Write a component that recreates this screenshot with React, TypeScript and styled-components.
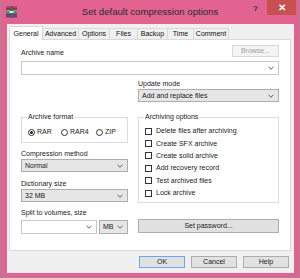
import React from "react";
import styled, { createGlobalStyle } from "styled-components";

const Global = createGlobalStyle`
  html, body { margin: 0; padding: 0; background: #ffffff; }
  * { box-sizing: border-box; }
  body { font-family: "Liberation Sans", Arial, sans-serif; }
`;

const Window = styled.div`
  width: 300px;
  height: 278px;
  background: #e2638f;
  border: 1px solid #a58794;
  border-top: none;
  display: flex;
  flex-direction: column;
`;

const TitleBar = styled.div`
  height: 24px;
  display: grid;
  grid-template-columns: 1fr auto 1fr;
  align-items: start;
`;

const IconBox = styled.div`
  padding: 6px 0 0 4px;
  display: flex;
`;

const Title = styled.div`
  font-size: 9.6px;
  line-height: 12px;
  color: #2b2b2b;
  padding-top: 6px;
  white-space: nowrap;
`;

const Controls = styled.div`
  display: flex;
  justify-content: flex-end;
  align-items: flex-start;
  padding-right: 3px;
`;

const HelpGlyph = styled.div`
  font-size: 8px;
  font-weight: bold;
  color: #333;
  line-height: 8px;
  padding-top: 5px;
  margin-right: 9px;
`;

const CloseBtn = styled.div`
  width: 29px;
  height: 15px;
  background: #c75050;
  color: #fff;
  font-size: 10px;
  font-weight: bold;
  display: flex;
  align-items: center;
  justify-content: center;
  line-height: 10px;
`;

const Client = styled.div`
  flex: 1;
  margin: 0 5px 4px 6px;
  background: #f0f0f0;
  padding: 2px 3px 0 2px;
  display: flex;
  flex-direction: column;
`;

const TabStrip = styled.div`
  display: flex;
  align-items: flex-end;
  height: 14px;
  margin-bottom: -1px;
`;

const Tab = styled.div<{ $w: number; $active?: boolean }>`
  width: ${(p) => p.$w}px;
  height: ${(p) => (p.$active ? 14 : 11)}px;
  margin-bottom: ${(p) => (p.$active ? 0 : 1)}px;
  margin-left: ${(p) => (p.$active ? 0 : -1)}px;
  background: ${(p) => (p.$active ? "#ffffff" : "#f0f0f0")};
  border: 1px solid #d9d9d9;
  border-bottom: none;
  font-size: 7px;
  line-height: 8px;
  color: #111;
  display: flex;
  align-items: center;
  justify-content: center;
  position: relative;
  z-index: ${(p) => (p.$active ? 2 : 1)};
  &:first-child { margin-left: 0; }
`;

const Panel = styled.div`
  height: 212px;
  background: #ffffff;
  border: 1px solid #d9d9d9;
  padding: 5px 11px 0 11px;
  display: flex;
  flex-direction: column;
`;

const Label = styled.div`
  font-size: 7px;
  line-height: 8px;
  color: #1a1a1a;
  white-space: nowrap;
`;

const TopRow = styled.div`
  display: flex;
  justify-content: space-between;
  align-items: flex-end;
  height: 12px;
`;

const Button = styled.div<{ $w?: number; $disabled?: boolean; $default?: boolean; $h?: number }>`
  width: ${(p) => (p.$w ? `${p.$w}px` : "auto")};
  height: ${(p) => p.$h ?? 12}px;
  background: ${(p) => (p.$disabled ? "#f4f4f4" : "#e1e1e1")};
  border: 1px solid ${(p) => (p.$disabled ? "#d9d9d9" : p.$default ? "#6fa8e6" : "#adadad")};
  color: ${(p) => (p.$disabled ? "#a3a3a3" : "#1a1a1a")};
  font-size: 7px;
  line-height: 8px;
  display: flex;
  align-items: center;
  justify-content: center;
`;

const Combo = styled.div<{ $edit?: boolean; $w?: number; $h?: number }>`
  width: ${(p) => (p.$w ? `${p.$w}px` : "100%")};
  height: ${(p) => p.$h ?? 13}px;
  background: ${(p) => (p.$edit ? "#ffffff" : "#e6e6e6")};
  border: 1px solid ${(p) => (p.$edit ? "#c5c7cc" : "#adadad")};
  display: flex;
  align-items: center;
  justify-content: space-between;
  padding: 0 4px 0 3px;
  font-size: 7px;
  line-height: 8px;
  color: #1a1a1a;
`;

const Chevron = () => (
  <svg width="6" height="4" viewBox="0 0 6 4">
    <polyline points="0.5,0.8 3,3.2 5.5,0.8" fill="none" stroke="#606060" strokeWidth="1" />
  </svg>
);

const NameCombo = styled(Combo)`
  margin-top: 4px;
`;

const UpdateRow = styled.div`
  display: grid;
  grid-template-columns: 107px 141px;
  column-gap: 10px;
  margin-top: 5px;
`;

const Stack = styled.div`
  display: flex;
  flex-direction: column;
  gap: 1px;
`;

const Columns = styled.div`
  display: grid;
  grid-template-columns: 107px 141px;
  column-gap: 10px;
  margin-top: 11px;
`;

const Column = styled.div`
  display: flex;
  flex-direction: column;
`;

const Group = styled.fieldset<{ $h: number }>`
  margin: 0;
  height: ${(p) => p.$h}px;
  border: 1px solid #dcdcdc;
  padding: 0 6px;
  min-width: 0;
`;

const Legend = styled.legend`
  font-size: 7px;
  line-height: 8px;
  color: #1a1a1a;
  padding: 0 1px;
  margin-left: -1px;
`;

const RadioRow = styled.div`
  display: grid;
  grid-template-columns: 33px 35px auto;
  margin-top: 7px;
  height: 8px;
  align-items: center;
`;

const RadioItem = styled.div`
  display: flex;
  align-items: center;
  gap: 2px;
  font-size: 7px;
  line-height: 8px;
  color: #1a1a1a;
`;

const RadioDot = styled.span<{ $on?: boolean }>`
  width: 7px;
  height: 7px;
  border-radius: 50%;
  border: 1px solid #333;
  background: #fff;
  display: flex;
  align-items: center;
  justify-content: center;
  &::after {
    content: "";
    width: 3px;
    height: 3px;
    border-radius: 50%;
    background: ${(p) => (p.$on ? "#222" : "transparent")};
  }
`;

const CheckList = styled.div`
  display: flex;
  flex-direction: column;
  margin-top: 4px;
`;

const CheckRow = styled.div`
  height: 12.4px;
  display: flex;
  align-items: center;
  gap: 4px;
  font-size: 7px;
  line-height: 8px;
  color: #1a1a1a;
  white-space: nowrap;
`;

const CheckBox = styled.span`
  width: 7px;
  height: 7px;
  border: 1px solid #333;
  background: #fff;
  flex: none;
`;

const FieldBlock = styled.div<{ $mt: number }>`
  margin-top: ${(p) => p.$mt}px;
  display: flex;
  flex-direction: column;
  gap: 1px;
`;

const SplitRow = styled.div`
  display: flex;
  gap: 2px;
  margin-top: 2px;
`;

const PasswordButton = styled(Button)`
  margin-top: 16px;
`;

const ButtonRow = styled.div`
  display: flex;
  justify-content: flex-end;
  gap: 6px;
  margin-top: 5px;
  padding-right: 2px;
`;

const WinRarIcon = () => (
  <svg width="13" height="12" viewBox="0 0 13 12">
    <rect x="1" y="0.5" width="11" height="3.5" fill="#9b2d5a" />
    <rect x="1" y="4" width="11" height="3.5" fill="#3e9a4a" />
    <rect x="1" y="7.5" width="11" height="4" fill="#6a3f8e" />
    <rect x="1" y="0.5" width="11" height="1" fill="#c0507a" />
    <rect x="1" y="4" width="11" height="1" fill="#63c06e" />
    <rect x="5" y="0" width="3" height="12" fill="#5b5b5b" />
    <rect x="4.5" y="5" width="4" height="2" fill="#e8e8e8" />
  </svg>
);

const tabs: [string, number][] = [
  ["General", 34],
  ["Advanced", 37],
  ["Options", 32],
  ["Files", 29],
  ["Backup", 31],
  ["Time", 27],
  ["Comment", 36],
];

const options = [
  "Delete files after archiving",
  "Create SFX archive",
  "Create solid archive",
  "Add recovery record",
  "Test archived files",
  "Lock archive",
];

export default function App() {
  return (
    <>
      <Global />
      <Window>
        <TitleBar>
          <IconBox>
            <WinRarIcon />
          </IconBox>
          <Title>Set default compression options</Title>
          <Controls>
            <HelpGlyph>?</HelpGlyph>
            <CloseBtn>✕</CloseBtn>
          </Controls>
        </TitleBar>
        <Client>
          <TabStrip>
            {tabs.map(([t, w], i) => (
              <Tab key={t} $w={w} $active={i === 0}>
                {t}
              </Tab>
            ))}
          </TabStrip>
          <Panel>
            <TopRow>
              <Label>Archive name</Label>
              <Button $w={47} $disabled>
                Browse...
              </Button>
            </TopRow>
            <NameCombo $edit $h={14}>
              <span />
              <Chevron />
            </NameCombo>
            <UpdateRow>
              <div />
              <Stack>
                <Label>Update mode</Label>
                <Combo>
                  <span>Add and replace files</span>
                  <Chevron />
                </Combo>
              </Stack>
            </UpdateRow>
            <Columns>
              <Column>
                <Group $h={30}>
                  <Legend>Archive format</Legend>
                  <RadioRow>
                    <RadioItem>
                      <RadioDot $on />
                      RAR
                    </RadioItem>
                    <RadioItem>
                      <RadioDot />
                      RAR4
                    </RadioItem>
                    <RadioItem>
                      <RadioDot />
                      ZIP
                    </RadioItem>
                  </RadioRow>
                </Group>
                <FieldBlock $mt={7}>
                  <Label>Compression method</Label>
                  <Combo>
                    <span>Normal</span>
                    <Chevron />
                  </Combo>
                </FieldBlock>
                <FieldBlock $mt={8}>
                  <Label>Dictionary size</Label>
                  <Combo>
                    <span>32 MB</span>
                    <Chevron />
                  </Combo>
                </FieldBlock>
                <FieldBlock $mt={7}>
                  <Label>Split to volumes, size</Label>
                  <SplitRow>
                    <Combo $edit $w={76} $h={14}>
                      <span />
                      <Chevron />
                    </Combo>
                    <Combo $w={29} $h={14}>
                      <span>MB</span>
                      <Chevron />
                    </Combo>
                  </SplitRow>
                </FieldBlock>
              </Column>
              <Column>
                <Group $h={90}>
                  <Legend>Archiving options</Legend>
                  <CheckList>
                    {options.map((o) => (
                      <CheckRow key={o}>
                        <CheckBox />
                        {o}
                      </CheckRow>
                    ))}
                  </CheckList>
                </Group>
                <PasswordButton $h={14}>Set password...</PasswordButton>
              </Column>
            </Columns>
          </Panel>
          <ButtonRow>
            <Button $w={46} $default>
              OK
            </Button>
            <Button $w={46}>Cancel</Button>
            <Button $w={46}>Help</Button>
          </ButtonRow>
        </Client>
      </Window>
    </>
  );
}
